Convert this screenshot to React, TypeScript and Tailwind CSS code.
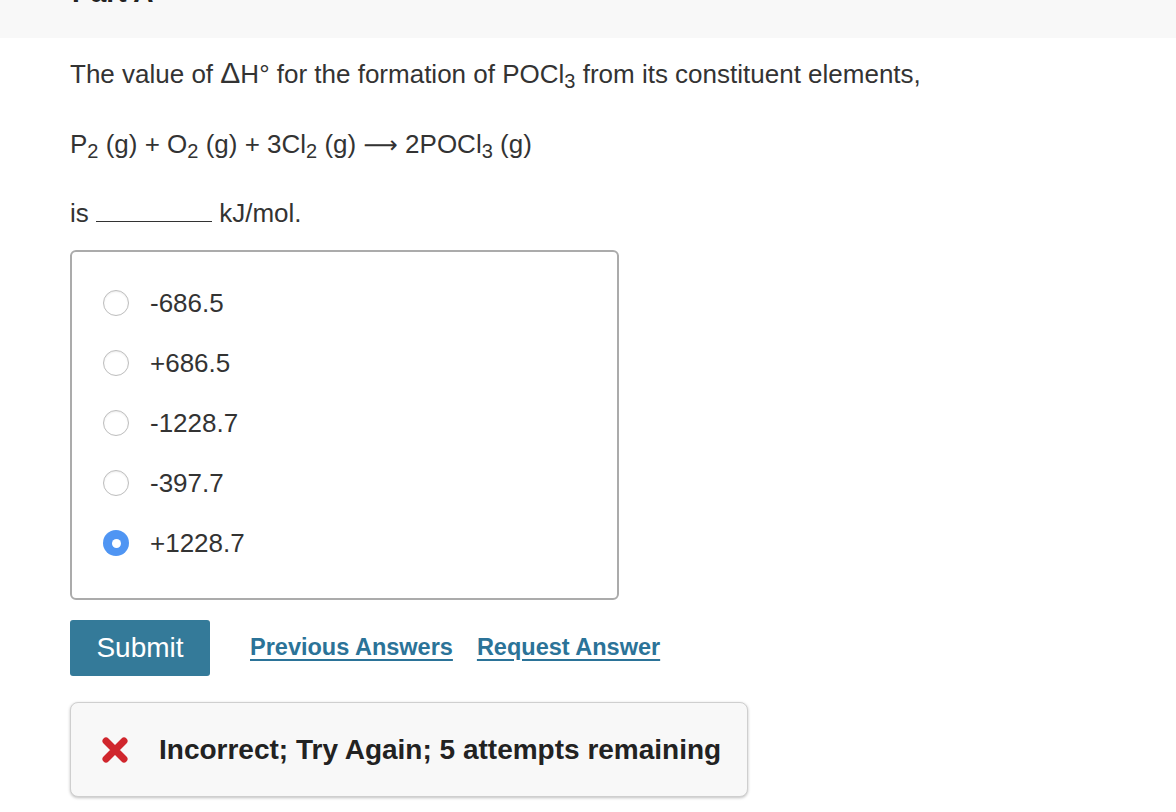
import React, { useState } from 'react';

const options = ['-686.5', '+686.5', '-1228.7', '-397.7', '+1228.7'];

const Radio = ({ checked }: { checked: boolean }) =>
  checked ? (
    <span className="flex h-[26px] w-[26px] items-center justify-center rounded-full bg-[#4f95f3]">
      <span className="h-[9px] w-[9px] rounded-full bg-white" />
    </span>
  ) : (
    <span className="h-[26px] w-[26px] rounded-full border border-[#bdbdbd] bg-white shadow-[inset_0_1px_2px_rgba(0,0,0,0.08)]" />
  );

export default function App() {
  const [selected, setSelected] = useState(4);

  return (
    <div className="min-h-[812px] bg-white text-[#333] [font-family:'Liberation_Sans',Arial,sans-serif]">
      {/* cabeçalho da parte, cortado no topo */}
      <div className="h-[38px] overflow-hidden bg-[#f8f8f8]">
        <div className="-mt-[21px] pl-[72px] text-[28px] font-bold leading-[28px] text-[#222]">Part A</div>
      </div>

      <div className="px-[70px]">
        <p className="mt-[20px] text-[26px] leading-[30px]">
          The value of <span className="text-[30px] leading-none">Δ</span>H° for the formation of POCl
          <sub className="text-[20px]">3</sub> from its constituent elements,
        </p>

        <p className="mt-[40px] text-[26px] leading-[30px]">
          P<sub className="text-[20px]">2</sub> (g) + O<sub className="text-[20px]">2</sub> (g) + 3Cl
          <sub className="text-[20px]">2</sub> (g){' '}
          <span className="[font-family:'DejaVu_Sans',sans-serif] text-[24px]">⟶</span> 2POCl
          <sub className="text-[20px]">3</sub> (g)
        </p>

        <p className="mt-[38px] text-[26px] leading-[30px]">
          is <span className="inline-block w-[116px] border-b border-[#333] align-baseline" /> kJ/mol.
        </p>

        <div className="mt-[22px] w-[549px] rounded-[6px] border-2 border-[#ababab] px-[31px] pt-[21px] pb-[25px]">
          {options.map((o, i) => (
            <label
              key={o}
              onClick={() => setSelected(i)}
              className="flex h-[60px] cursor-pointer items-center gap-[21px] text-[26px]"
            >
              <Radio checked={selected === i} />
              <span>{o}</span>
            </label>
          ))}
        </div>

        <div className="mt-[20px] flex items-center">
          <button className="h-[56px] w-[140px] rounded-[3px] bg-[#347a99] text-[28px] text-white">Submit</button>
          <a href="#" className="ml-[40px] text-[23.5px] font-bold text-[#2b7398] underline underline-offset-[4px] decoration-2">
            Previous Answers
          </a>
          <a href="#" className="ml-[24px] text-[23.5px] font-bold text-[#2b7398] underline underline-offset-[4px] decoration-2">
            Request Answer
          </a>
        </div>

        <div className="mt-[26px] flex h-[95px] w-[678px] items-center rounded-[8px] border border-[#cfcfcf] bg-[#f8f8f8] pl-[30px] shadow-[0_1px_3px_rgba(0,0,0,0.25)]">
          <svg width="28" height="28" viewBox="0 0 28 28">
            <path d="M5 5 L23 23 M23 5 L5 23" stroke="#d0262d" strokeWidth="7" strokeLinecap="round" />
          </svg>
          <span className="ml-[30px] text-[28px] font-bold text-[#222]">
            Incorrect; Try Again; 5 attempts remaining
          </span>
        </div>
      </div>
    </div>
  );
}
